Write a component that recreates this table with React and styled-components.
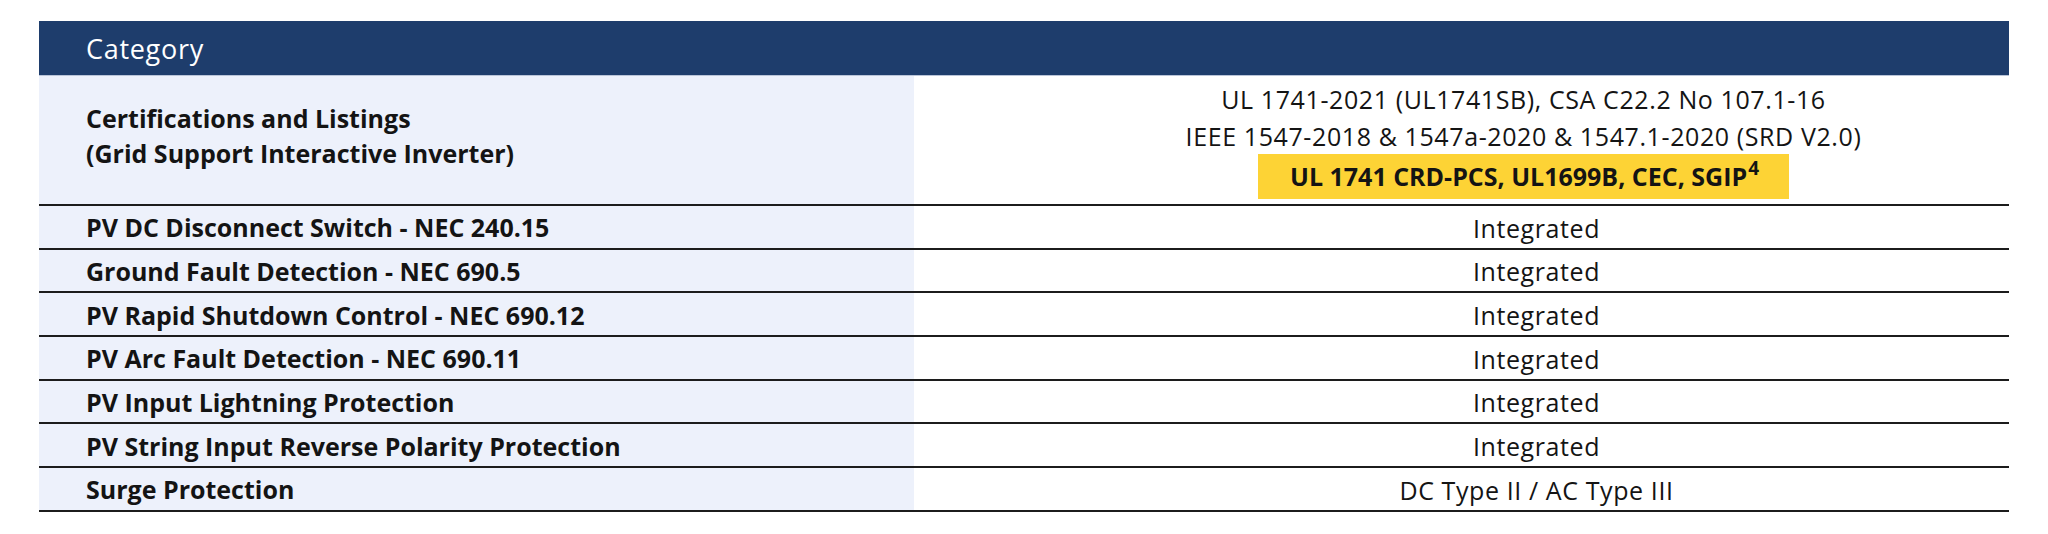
import React from 'react'
import styled, { createGlobalStyle } from 'styled-components'

const GlobalStyle = createGlobalStyle`
  body {
    margin: 0;
    background: #ffffff;
    font-family: "Open Sans", "Liberation Sans", sans-serif;
    color: #141414;
  }
`

const colors = {
  navy: '#1e3d6c',
  label: '#edf1fb',
  rule: '#1c1c1c',
  yellow: '#fdd335'
}

const Page = styled.div`
  padding: 21px 39px 0 39px;
`

const Table = styled.div`
  display: flex;
  flex-direction: column;
`

const Header = styled.div`
  height: 54px;
  background: ${colors.navy};
  border-bottom: 1px solid #b9c4d8;
  display: flex;
  align-items: center;
  padding-left: 47px;
  color: #ffffff;
  font-size: 27px;
  letter-spacing: 0.7px;
`

const Row = styled.div`
  display: grid;
  grid-template-columns: 875px 1fr;
  height: ${p => p.$height}px;
  border-bottom: 2px solid ${colors.rule};
`

const Label = styled.div`
  background: ${colors.label};
  padding: ${p => (p.$tall ? '0 0 8px 47px' : '2px 0 0 47px')};
  display: flex;
  flex-direction: column;
  justify-content: center;
  font-size: 25px;
  font-weight: 700;
  line-height: 35px;
`

const Value = styled.div`
  padding: ${p => (p.$tall ? '0 0 0 124px' : '2px 0 0 150px')};
  display: flex;
  flex-direction: column;
  align-items: center;
  justify-content: center;
  font-size: 25px;
  line-height: 36.6px;
  letter-spacing: 0.6px;
  text-align: center;
`

const Highlight = styled.div`
  background: ${colors.yellow};
  height: 45px;
  padding: 0 30px 0 32px;
  display: flex;
  align-items: center;
  font-weight: 700;
  letter-spacing: 0;
`

const Sup = styled.sup`
  font-size: 19px;
  line-height: 0;
  vertical-align: 11px;
  margin-left: 1px;
`

const rows = [
  ['PV DC Disconnect Switch - NEC 240.15', 'Integrated'],
  ['Ground Fault Detection - NEC 690.5', 'Integrated'],
  ['PV Rapid Shutdown Control - NEC 690.12', 'Integrated'],
  ['PV Arc Fault Detection - NEC 690.11', 'Integrated'],
  ['PV Input Lightning Protection', 'Integrated'],
  ['PV String Input Reverse Polarity Protection', 'Integrated'],
  ['Surge Protection', 'DC Type II / AC Type III']
]

export default function App () {
  return (
    <Page>
      <GlobalStyle />
      <Table>
        <Header>Category</Header>
        <Row $height={128}>
          <Label $tall>
            <div>Certifications and Listings</div>
            <div>(Grid Support Interactive Inverter)</div>
          </Label>
          <Value $tall>
            <div>UL 1741-2021 (UL1741SB), CSA C22.2 No 107.1-16</div>
            <div>IEEE 1547-2018 &amp; 1547a-2020 &amp; 1547.1-2020 (SRD V2.0)</div>
            <Highlight>
              <span>UL 1741 CRD-PCS, UL1699B, CEC, SGIP<Sup>4</Sup></span>
            </Highlight>
          </Value>
        </Row>
        {rows.map(([label, value]) => (
          <Row key={label} $height={41.7}>
            <Label>{label}</Label>
            <Value>{value}</Value>
          </Row>
        ))}
      </Table>
    </Page>
  )
}
